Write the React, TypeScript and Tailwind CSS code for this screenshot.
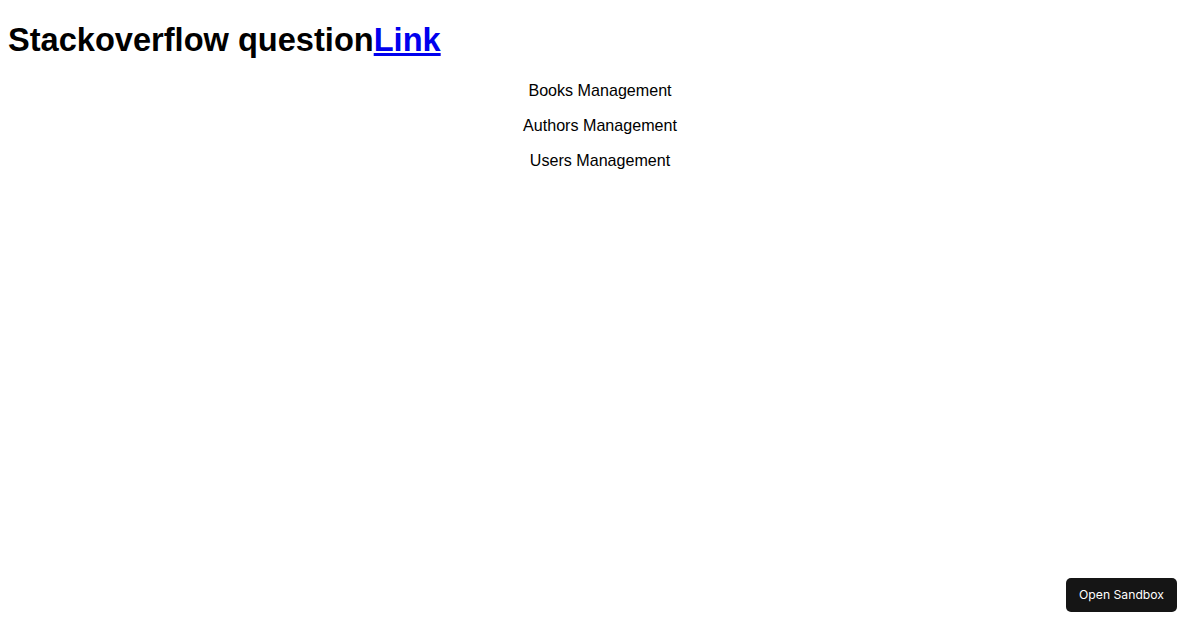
export default function App() {
  const items = ['Books Management', 'Authors Management', 'Users Management'];

  return (
    <div className="min-h-[630px] bg-white px-2 font-['Liberation_Sans',Arial,sans-serif] text-black">
      {/* Heading */}
      <h1 className="pt-[21px] text-[32.6px] leading-[37px] font-bold">
        Stackoverflow question
        <a href="#" className="text-[#0000ee] underline">
          Link
        </a>
      </h1>

      {/* Menu */}
      <div className="mt-[23px] flex flex-col items-center gap-[17px] text-[16.1px] leading-[18px]">
        {items.map((item) => (
          <p key={item}>{item}</p>
        ))}
      </div>

      <button className="fixed right-[23px] bottom-[18px] h-[34px] w-[111px] rounded-[5px] bg-[#151515] font-['Inter',sans-serif] text-[12.2px] text-white">
        Open Sandbox
      </button>
    </div>
  );
}
